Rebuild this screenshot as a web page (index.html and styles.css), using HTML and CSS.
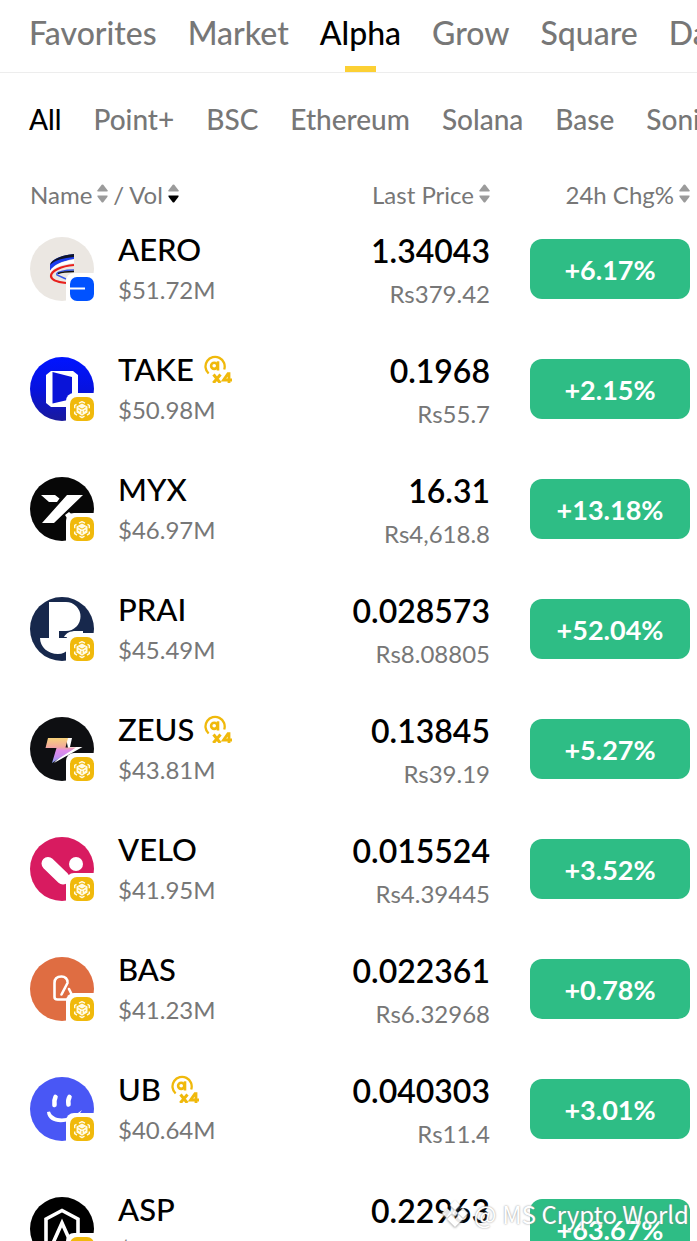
FILE: index.html
```html
<!DOCTYPE html>
<html lang="en">
<head>
<meta charset="utf-8">
<meta name="viewport" content="width=device-width, initial-scale=1">
<title>Alpha market</title>
<link rel="stylesheet" href="styles.css">
</head>
<body>
<svg class="defs" width="0" height="0" aria-hidden="true">
  <defs>
    <linearGradient id="take-bg" x1="0" y1="0" x2="0" y2="1"><stop offset="0" stop-color="#0014ff"/><stop offset=".5" stop-color="#0612e0"/><stop offset="1" stop-color="#1a1a9a"/></linearGradient>
    <linearGradient id="zeus-fill" x1="0" y1="0" x2="0" y2="1"><stop offset="0" stop-color="#f7d27a"/><stop offset=".36" stop-color="#f3a99c"/><stop offset=".5" stop-color="#e08bea"/><stop offset=".75" stop-color="#c78df0"/><stop offset="1" stop-color="#7fa0ee"/></linearGradient>
    <symbol id="bnb" viewBox="0 0 64 64">
      <path d="M36 64V44a8 8 0 0 1 8-8h20v28z" fill="#fff"/>
      <rect x="40" y="40" width="24" height="24" rx="7" fill="#f0b90b"/>
      <g fill="none" stroke="#fffbe6" stroke-width="1.400" stroke-linejoin="round">
        <path d="M49 46.200l3-1.600 3 1.600M57.500 47.300l1.800 1v3M59.300 54.500v2.200l-2.300 1.400M54.500 59.200L52 60.600l-2.500-1.400M47 58.100l-2.300-1.400v-2.200M44.700 51.300v-3l1.800-1"/>
      </g>
      <path d="M46.500 49.500l5.500-3 5.500 3v6L52 58.700l-5.500-3.200z" fill="#fffbe6"/>
      <path d="M48.500 50.200l3.500 1.900 3.500-1.900M52 54v3M48.300 53.200l1.700 1M55.700 53.200l-1.700 1" fill="none" stroke="#f0b90b" stroke-width="1"/>
    </symbol>
    <symbol id="x4" viewBox="0 0 28 28">
      <path d="M4.600 18.500A9.600 9.600 0 1 1 20.200 14.500" fill="none" stroke="#f0b90b" stroke-width="2.300"/>
      <circle cx="10.200" cy="10.800" r="3.100" fill="none" stroke="#f0b90b" stroke-width="2.600"/>
      <path d="M14 6.300v9.200" fill="none" stroke="#f0b90b" stroke-width="2.600"/>
      <path d="M9.500 19.500l6.800 8.500M16.500 19.500L9.300 28" fill="none" stroke="#f0b90b" stroke-width="3"/>
      <path d="M25 28V18.700h-1L19.500 25H28" fill="none" stroke="#f0b90b" stroke-width="2.800"/>
    </symbol>
    <symbol id="sort" viewBox="0 0 10 19">
      <path d="M4.200.8Q5 0 5.800.8L10 6.300V7.500H0V6.300z" fill="#9b9b9b"/>
      <path d="M4.200 18.200Q5 19 5.800 18.200L10 12.700V11.500H0v1.200z"/>
    </symbol>
  </defs>
</svg>

<main class="app">
  <nav class="tabs" aria-label="Sections">
    <a href="#favorites">Favorites</a>
    <a href="#market">Market</a>
    <a href="#alpha" class="active" aria-current="page">Alpha</a>
    <a href="#grow">Grow</a>
    <a href="#square">Square</a>
    <a href="#data">Data</a>
  </nav>

  <div class="filters">
    <button type="button" class="active">All</button>
    <button type="button">Point+</button>
    <button type="button">BSC</button>
    <button type="button">Ethereum</button>
    <button type="button">Solana</button>
    <button type="button">Base</button>
    <button type="button">Sonic</button>
  </div>

  <table class="coins">
    <thead>
      <tr>
        <th scope="col"><div class="sorts"><button type="button">Name<svg><use href="#sort"/></svg></button><span>/</span><button type="button" class="sorted">Vol<svg><use href="#sort"/></svg></button></div></th>
        <th scope="col"><div class="sorts end"><button type="button">Last Price<svg><use href="#sort"/></svg></button></div></th>
        <th scope="col"><div class="sorts end"><button type="button">24h Chg%<svg><use href="#sort"/></svg></button></div></th>
      </tr>
    </thead>
    <tbody>
      <tr>
        <td><div class="coin">
          <svg class="logo" viewBox="0 0 64 64"><circle cx="32" cy="32" r="32" fill="#ebe7e2"/>
            <path d="M44 17C33 18 20 22 20 29v5c3-6 12-10 24-12z" fill="#1b3df0"/>
            <path d="M44 17C33 18 21 22 20 28c5-5 13-7 24-8z" fill="#101526"/>
            <path d="M44 22.500C34 24 25 27 20 34v2c4-6 13-9 24-10z" fill="#fff"/>
            <path d="M44 28C31 29 21 34 21 39c0 4 6 6 15 7" fill="none" stroke="#e8201c" stroke-width="2.200"/>
            <path d="M44 33c-9 0-19 2-17 5l9 4" fill="none" stroke="#3858e8" stroke-width="1.500"/>
            <path d="M44 34.500c-6 0-12 .5-16 2" fill="none" stroke="#111" stroke-width="1.500"/>
            <path d="M36 64V44a8 8 0 0 1 8-8h20v28z" fill="#fff"/><rect x="40" y="40" width="24" height="24" rx="7" fill="#0052ff"/><path d="M40 51.500h15" stroke="#fff" stroke-width="2"/></svg>
          <div class="label"><strong>AERO</strong><small>$51.72M</small></div></div></td>
        <td><div class="price"><strong>1.34043</strong><small>Rs379.42</small></div></td>
        <td><button type="button" class="change">+6.17%</button></td>
      </tr>
      <tr>
        <td><div class="coin">
          <svg class="logo" viewBox="0 0 64 64"><circle cx="32" cy="32" r="32" fill="url(#take-bg)"/><path d="M16 18l5-4h22l5 4v28l-5 4H21l-5-4z" fill="#fff"/><path d="M22.500 15L42 20v22l-19.500 4.500z" fill="#0a14d8"/><use href="#bnb"/></svg>
          <div class="label"><strong>TAKE<svg class="boost" role="img" aria-label="x4 points"><use href="#x4"/></svg></strong><small>$50.98M</small></div></div></td>
        <td><div class="price"><strong>0.1968</strong><small>Rs55.7</small></div></td>
        <td><button type="button" class="change">+2.15%</button></td>
      </tr>
      <tr>
        <td><div class="coin">
          <svg class="logo" viewBox="0 0 64 64"><circle cx="32" cy="32" r="32" fill="#070707"/><path d="M37 18h16L24 46H12zM11 18h14l4.500 3.500L27 25h-8zM35 38l4-3 13 11H40z" fill="#fff"/><use href="#bnb"/></svg>
          <div class="label"><strong>MYX</strong><small>$46.97M</small></div></div></td>
        <td><div class="price"><strong>16.31</strong><small>Rs4,618.8</small></div></td>
        <td><button type="button" class="change">+13.18%</button></td>
      </tr>
      <tr>
        <td><div class="coin">
          <svg class="logo" viewBox="0 0 64 64"><circle cx="32" cy="32" r="32" fill="#17284c"/><path d="M19 5h17a14.500 14.500 0 0 1 0 29h-7v7h13c0 9-5 16-14 16C18 57 10 50 10 41h9z" fill="#fff"/><path d="M34 40c2-4 6-6 12-6h7v6z" fill="#fff"/><use href="#bnb"/></svg>
          <div class="label"><strong>PRAI</strong><small>$45.49M</small></div></div></td>
        <td><div class="price"><strong>0.028573</strong><small>Rs8.08805</small></div></td>
        <td><button type="button" class="change">+52.04%</button></td>
      </tr>
      <tr>
        <td><div class="coin">
          <svg class="logo" viewBox="0 0 64 64"><circle cx="32" cy="32" r="32" fill="#0e0f12"/><path d="M36 21h6l-2 9h12.500L24 46l14-15z" fill="#fff"/><path d="M18 21h20l-2.500 9.500H46L22 46l4.500-15H15.500z" fill="url(#zeus-fill)"/><use href="#bnb"/></svg>
          <div class="label"><strong>ZEUS<svg class="boost" role="img" aria-label="x4 points"><use href="#x4"/></svg></strong><small>$43.81M</small></div></div></td>
        <td><div class="price"><strong>0.13845</strong><small>Rs39.19</small></div></td>
        <td><button type="button" class="change">+5.27%</button></td>
      </tr>
      <tr>
        <td><div class="coin">
          <svg class="logo" viewBox="0 0 64 64"><circle cx="32" cy="32" r="32" fill="#d81b60"/><circle cx="46" cy="27" r="7" fill="#fff"/><path d="M18 26.500L33 41" stroke="#fff" stroke-width="13" stroke-linecap="round"/><use href="#bnb"/></svg>
          <div class="label"><strong>VELO</strong><small>$41.95M</small></div></div></td>
        <td><div class="price"><strong>0.015524</strong><small>Rs4.39445</small></div></td>
        <td><button type="button" class="change">+3.52%</button></td>
      </tr>
      <tr>
        <td><div class="coin">
          <svg class="logo" viewBox="0 0 64 64"><circle cx="32" cy="32" r="32" fill="#df6d42"/><path d="M31.500 37.500L37.500 26c.5-4-2.500-6.500-6-6.500-4.500 0-7 2.500-7 6.500v14c0 2 1 2.500 3 2.500h12M39 32l2.500 5" fill="none" stroke="#fff" stroke-width="2.600" stroke-linejoin="round" stroke-linecap="round"/><use href="#bnb"/></svg>
          <div class="label"><strong>BAS</strong><small>$41.23M</small></div></div></td>
        <td><div class="price"><strong>0.022361</strong><small>Rs6.32968</small></div></td>
        <td><button type="button" class="change">+0.78%</button></td>
      </tr>
      <tr>
        <td><div class="coin">
          <svg class="logo" viewBox="0 0 64 64"><circle cx="32" cy="32" r="32" fill="#4957f5"/><path d="M25.500 20C24 23 24 25 24.500 28M39.500 20c-1.500 2.500-1.500 4.500-1 7.500" fill="none" stroke="#fff" stroke-width="4.600" stroke-linecap="round"/><path d="M17 35l3-.5C22.500 43 38 45 52 33 43 49 18 49 17 35z" fill="#fff"/><use href="#bnb"/></svg>
          <div class="label"><strong>UB<svg class="boost" role="img" aria-label="x4 points"><use href="#x4"/></svg></strong><small>$40.64M</small></div></div></td>
        <td><div class="price"><strong>0.040303</strong><small>Rs11.4</small></div></td>
        <td><button type="button" class="change">+3.01%</button></td>
      </tr>
      <tr>
        <td><div class="coin">
          <svg class="logo" viewBox="0 0 64 64"><circle cx="32" cy="32" r="32" fill="#000"/><path d="M16 46V22l16-8.500L48 22v24M23 46l9-20 9 20" fill="none" stroke="#fff" stroke-width="3.600"/><use href="#bnb"/></svg>
          <div class="label"><strong>ASP</strong><small>$38.15M</small></div></div></td>
        <td><div class="price"><strong>0.22963</strong><small>Rs65.01</small></div></td>
        <td><button type="button" class="change">+63.67%</button></td>
      </tr>
    </tbody>
  </table>

  <div class="watermark">
    <svg viewBox="0 0 26 28"><path d="M13 0l5 5-5 5-5-5zM5 8l5 5-5 5-5-5zM21 8l5 5-5 5-5-5zM13 10l3 3-3 3-3-3zM5 19l4-4 4 4 4-4 4 4-8 8z" fill="#fff"/></svg>
    <span>@</span>
    <span>MS Crypto World</span>
  </div>
</main>
</body>
</html>
```
FILE: styles.css
```css
* { box-sizing: border-box; }

body {
  margin: 0;
  background: #fff;
  color: #000;
  font-family: Lato, "Open Sans", sans-serif;
}

button {
  padding: 0;
  border: 0;
  background: none;
  color: inherit;
  font: inherit;
}

.defs { position: absolute; }

.app {
  position: relative;
  height: 100vh;
  overflow: hidden;
}

.tabs {
  display: flex;
  gap: 31px;
  height: 73px;
  padding-left: 29px;
  border-bottom: 1px solid #ededed;
  font-size: 32px;
  font-weight: 500;
  line-height: 66px;
  overflow: hidden;
}

.tabs a {
  position: relative;
  color: #777;
  text-decoration: none;
}

.tabs .active { color: #000; }

.tabs .active::after {
  content: "";
  position: absolute;
  bottom: 0;
  left: 50%;
  width: 31px;
  height: 6px;
  margin-left: -15px;
  background: #fcd034;
}

.filters {
  display: flex;
  gap: 32px;
  padding-left: 29px;
  color: #777;
  font-size: 28px;
  font-weight: 500;
  line-height: 92px;
  overflow: hidden;
}

.filters .active { color: #000; }

.coins {
  width: 100%;
  margin-top: 16px;
  padding: 0 7px 0 30px;
  border-spacing: 0;
}

.coins th,
.coins td {
  padding: 0;
  font-weight: 400;
}

.coins th { height: 28px; }

.coins td { height: 120px; }

.coins th:last-child,
.coins td:last-child { width: 200px; padding-left: 40px; }

.sorts,
.sorts button {
  display: flex;
  align-items: center;
  gap: 5px;
  color: #777;
  font-size: 24px;
  line-height: 28px;
  white-space: nowrap;
}

.sorts.end { justify-content: flex-end; }

.sorts svg {
  width: 11px;
  height: 19px;
  margin-bottom: 4px;
  fill: #9b9b9b;
}

.sorts .sorted svg { fill: #000; }

.coin {
  display: flex;
  gap: 24px;
  padding-top: 4px;
}

.logo {
  width: 64px;
  height: 64px;
}

.label,
.price {
  display: flex;
  flex-direction: column;
}

.label { gap: 8px; margin-top: -6px; }

.price {
  align-items: flex-end;
  gap: 10px;
  padding-top: 4px;
}

strong {
  display: flex;
  gap: 10px;
  font-size: 31px;
  font-weight: 500;
  line-height: 36px;
}

.price strong {
  font-size: 32px;
  font-weight: 600;
}

small {
  color: #777;
  font-size: 24px;
  line-height: 30px;
}

.boost {
  width: 28px;
  height: 28px;
  margin-top: 4px;
}

.change {
  display: block;
  width: 100%;
  height: 60px;
  border-radius: 12px;
  background: #2ebd85;
  color: #fff;
  font-size: 27px;
  font-weight: 700;
}

.watermark {
  position: absolute;
  right: 8px;
  bottom: 9px;
  display: flex;
  align-items: center;
  gap: 6px;
  color: #fff;
  font-family: "Noto Sans CJK SC", "Noto Sans", sans-serif;
  font-size: 24px;
  line-height: 36px;
  text-shadow: 0 0 2px #888;
  pointer-events: none;
}

.watermark svg {
  width: 26px;
  height: 28px;
  filter: drop-shadow(0 1px 1px #999);
  opacity: .9;
}
```
